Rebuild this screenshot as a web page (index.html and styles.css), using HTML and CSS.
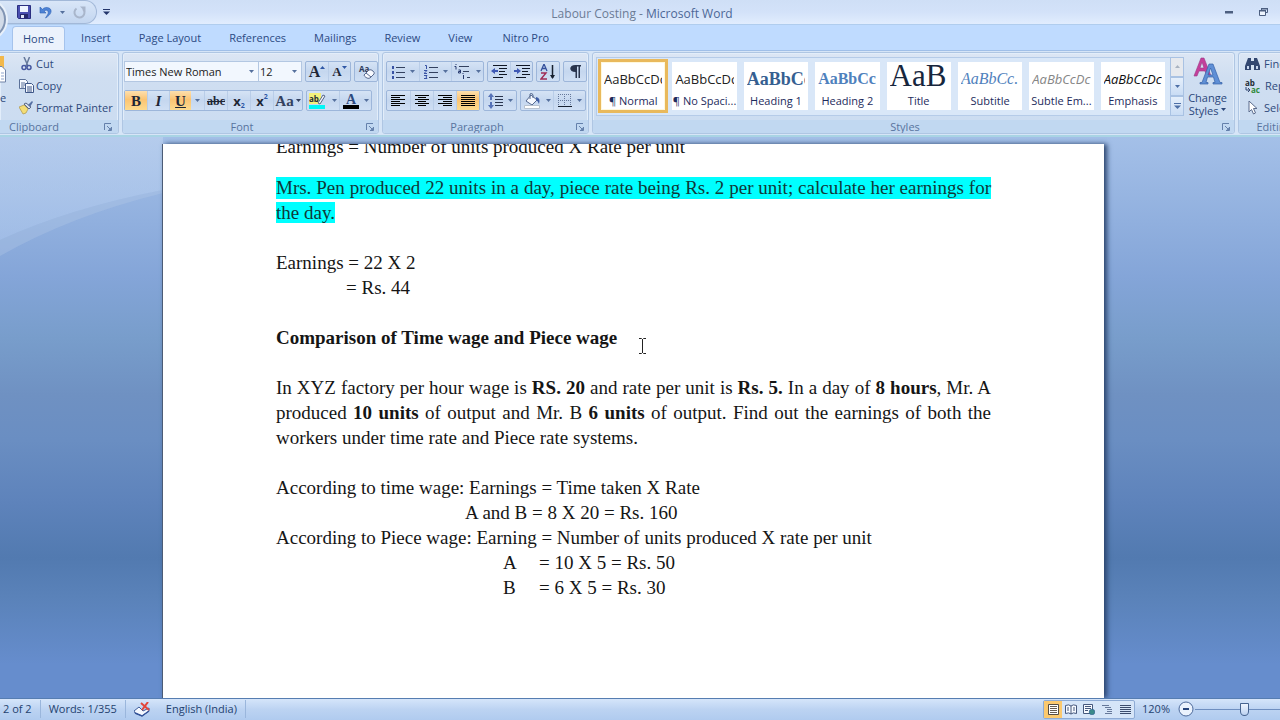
FILE: index.html
```html
<!DOCTYPE html>
<html lang="en">
<head>
<meta charset="utf-8">
<title>Labour Costing - Microsoft Word</title>
<link rel="stylesheet" href="styles.css">
</head>
<body>
<svg class="defs" aria-hidden="true">
  <symbol id="launch" viewBox="0 0 8 8"><path d="M.5 7V.5H7M4 7.5h3.500V4M3 3l4 4" fill="none" stroke="#6480ab"/><path d="M4.500 7h3V4z" fill="#6480ab"/></symbol>
  <symbol id="down" viewBox="0 0 5 3"><path d="M0 0h5L2.500 3z" fill="currentColor"/></symbol>
</svg>
<div class="app">
  <header class="titlebar">
    <div class="orb"></div>
    <div class="quick">
      <button aria-label="Save"><svg width="14" height="14" viewBox="0 0 14 14"><path d="M.5.5h13v13h-12l-1-1z" fill="#4a4fb0" stroke="#2b2f80"/><path d="M3 1h8v6H3z" fill="#eef4ff"/><path d="M3 9h8v4H3z" fill="#26296b"/><path d="M4 10h3v3H4z" fill="#dfe6fa"/></svg></button>
      <button aria-label="Undo"><svg width="13" height="13" viewBox="0 0 13 13"><path d="M1 1v6h6L5 5c3-2 5 0 4 3L6.500 12C12 9 14 4 10 2 7.500.8 5 1.500 3.500 3.300z" fill="#4d83d6" stroke="#2f62b4" stroke-width=".6"/></svg></button>
      <svg class="arrow" width="5" height="3"><use href="#down"/></svg>
      <button aria-label="Repeat"><svg width="13" height="13" viewBox="0 0 13 13"><path d="M3.500 2.500A5 5 0 1 0 10 3" fill="none" stroke="#a9b6cb" stroke-width="2"/><path d="M7 .5h5.500v5.500z" fill="#a9b6cb"/></svg></button>
    </div>
    <button class="customize" aria-label="Customize Quick Access Toolbar"><svg width="7" height="6" viewBox="0 0 7 6"><path d="M0 .5h7" stroke="#23356b"/><path d="M0 2.500h7L3.500 6z" fill="#23356b"/></svg></button>
    <h1 class="title"><span>Labour Costing - </span>Microsoft Word</h1>
    <div class="window-buttons">
      <button aria-label="Minimize"><svg width="8" height="3"><path d="M0 0h8v2.500H0z" fill="#4c5f80"/></svg></button>
      <button aria-label="Restore"><svg width="9" height="8" viewBox="0 0 9 8"><path d="M2.500 2V.5h6v4H7" fill="none" stroke="#4c5f80"/><path d="M.5 2.500h6v5h-6z" fill="#eef5ff" stroke="#4c5f80"/><path d="M2 .8h7M0 2.800h7" stroke="#4c5f80" stroke-width="1.500"/></svg></button>
    </div>
  </header>

  <nav class="tabs">
    <button class="tab active">Home</button><button class="tab">Insert</button><button class="tab">Page Layout</button><button class="tab">References</button><button class="tab">Mailings</button><button class="tab">Review</button><button class="tab">View</button><button class="tab">Nitro Pro</button>
  </nav>

  <section class="ribbon">
    <div class="group clipboard">
      <div class="body">
        <button class="paste"><svg width="6" height="32" viewBox="0 0 6 32"><path d="M0 3h4v14H0z" fill="#f2b84b"/><path d="M-4 13.500h6l3.500 3.500v12H-4z" fill="#fff" stroke="#7083a7"/><path d="M1 20h3M1 23h3M1 26h3" stroke="#8fa5cd"/></svg><span>e</span></button>
        <div class="commands">
          <button><svg width="15" height="14" viewBox="0 0 15 14"><path d="M5 0l4 9M10.500 0L7 9" stroke="#66799c" stroke-width="1.500"/><circle cx="5" cy="10.500" r="2" fill="none" stroke="#4658a0" stroke-width="1.500"/><circle cx="10" cy="10.500" r="2" fill="none" stroke="#4658a0" stroke-width="1.500"/></svg>Cut</button>
          <button><svg width="15" height="14" viewBox="0 0 15 14"><path d="M.5.5h6l2 2v7h-8z" fill="#f5f9ff" stroke="#5b7199"/><path d="M2 4h4M2 6h4M2 8h3" stroke="#5b7199"/><path d="M6.500 4.500h6l2 2v7h-8z" fill="#f5f9ff" stroke="#3e5788"/><path d="M8 8h5M8 10h5M8 12h5" stroke="#3e5788"/></svg>Copy</button>
          <button><svg width="15" height="14" viewBox="0 0 15 14"><path d="M0 6l5-2 4 4-2 4-3 1z" fill="#f4dd74" stroke="#ae9347" stroke-width=".7"/><path d="M5 3l5 5 2-2-5-4z" fill="#d9e0ec" stroke="#5a6784"/><path d="M9 4l4-4 1 1-3 5z" fill="#5670a4"/></svg>Format Painter</button>
        </div>
      </div>
      <div class="label"><span>Clipboard</span><svg width="8" height="8"><use href="#launch"/></svg></div>
    </div>

    <div class="group font">
      <div class="body rows">
        <div class="row">
          <div class="combos">
            <label class="combo family"><select aria-label="Font"><option>Times New Roman</option></select><svg width="5" height="3"><use href="#down"/></svg></label>
            <label class="combo size"><select aria-label="Font size"><option>12</option></select><svg width="5" height="3"><use href="#down"/></svg></label>
          </div>
          <div class="set"><button class="serif grow" aria-label="Grow font">A<svg width="5" height="3" viewBox="0 0 5 3"><path d="M0 3h5L2.500 0z" fill="#2e57a5"/></svg></button><button class="serif shrink" aria-label="Shrink font">A<svg width="5" height="3"><use href="#down"/></svg></button></div>
          <div class="set"><button aria-label="Clear formatting"><svg width="17" height="16" viewBox="0 0 17 16"><text x="1" y="8" class="tiny">Aa</text><path d="M6 11l5-5q2-1 4 1t1 3l-4 4q-2 1-4-.500t-2-2.500z" fill="#f8faff" stroke="#58698d"/><path d="M8 9l5 4" stroke="#58698d"/></svg></button></div>
        </div>
        <div class="row">
          <div class="set">
            <button class="serif on"><b>B</b></button><button class="serif"><i>I</i></button><button class="serif on"><u>U</u></button><button class="drop" aria-label="Underline style"><svg width="5" height="3"><use href="#down"/></svg></button><button class="serif strike"><s>abc</s></button><button class="bold">x<sub>2</sub></button><button class="bold">x<sup>2</sup></button><button class="serif case">Aa<svg width="5" height="3"><use href="#down"/></svg></button>
          </div>
          <div class="set">
            <button class="wide" aria-label="Highlight colour"><svg width="18" height="16" viewBox="0 0 18 16"><rect width="12" height="11" fill="#f3f07b"/><text x="0" y="9" class="tiny dark">ab</text><path d="M9 10l5-8 2 1-5 8z" fill="#eef2fa" stroke="#56668a"/><rect y="12" width="16" height="4" fill="#00f6f6"/></svg><svg width="5" height="3"><use href="#down"/></svg></button><button class="wide" aria-label="Font colour"><svg width="16" height="16" viewBox="0 0 16 16"><text x="3" y="11" class="letter">A</text><rect y="12" width="16" height="4" fill="#000"/></svg><svg width="5" height="3"><use href="#down"/></svg></button>
          </div>
        </div>
      </div>
      <div class="label"><span>Font</span><svg width="8" height="8"><use href="#launch"/></svg></div>
    </div>

    <div class="group paragraph">
      <div class="body rows">
        <div class="row">
          <div class="set">
            <button class="wide" aria-label="Bullets"><svg width="14" height="14" viewBox="0 0 14 14"><path d="M5 2.500h9M5 7.500h9M5 12.500h9" stroke="#33415f"/><path d="M1 1h2v3H1zM1 6h2v3H1zM1 11h2v3H1z" fill="#3953a4"/></svg><svg width="5" height="3"><use href="#down"/></svg></button><button class="wide" aria-label="Numbering"><svg width="14" height="14" viewBox="0 0 14 14"><path d="M5 2.500h9M5 7.500h9M5 12.500h9" stroke="#33415f"/><path d="M1 .5h1.500v3.500M0 5.500h3L0 8.500h3M0 10.500h3l-1 1.500 1 1.500H0" fill="none" stroke="#3953a4"/></svg><svg width="5" height="3"><use href="#down"/></svg></button><button class="wide" aria-label="Multilevel list"><svg width="17" height="15" viewBox="0 0 17 15"><path d="M5 2.500h10M9 7.500h6M13 13.500h3" stroke="#33415f"/><path d="M2 0v1M.5 2.500h1.500v3M4.500 6h2v3h-2V7.500h2M9 9v1M9.500 11v4" fill="none" stroke="#26386d"/></svg><svg width="5" height="3"><use href="#down"/></svg></button>
          </div>
          <div class="set">
            <button aria-label="Decrease indent"><svg width="16" height="13" viewBox="0 0 16 13"><path d="M2 .5h14M8 3.500h8M8 6.500h6M8 9.500h8M2 12.500h10" stroke="#101725"/><path d="M0 6l4-3v2h3v2H4v2z" fill="#3f59b5"/></svg></button><button aria-label="Increase indent"><svg width="16" height="13" viewBox="0 0 16 13"><path d="M2 .5h14M8 3.500h8M8 6.500h6M8 9.500h8M2 12.500h10" stroke="#101725"/><path d="M7 6L3 3v2H0v2h3v2z" fill="#3f59b5"/></svg></button>
          </div>
          <div class="set"><button aria-label="Sort"><svg width="16" height="16" viewBox="0 0 16 16"><path d="M1 7l3-7 3 7M2 4.500h4" fill="none" stroke="#34509c" stroke-width="1.300"/><path d="M1 9h5l-5 6h6" fill="none" stroke="#a02b55" stroke-width="1.400"/><path d="M12.500 1v13" stroke="#17202f" stroke-width="1.500"/><path d="M10 11h5l-2.500 4z" fill="#17202f"/></svg></button></div>
          <div class="set"><button aria-label="Show formatting marks"><svg width="11" height="13" viewBox="0 0 11 13"><path d="M5.500 0H11v1.500h-1V13H8.500V1.500H7V13H5.500V7C-1.500 7-1.500 0 5.500 0z" fill="#29344d"/></svg></button></div>
        </div>
        <div class="row">
          <div class="set align">
            <button aria-label="Align left"><svg width="15" height="12" viewBox="0 0 15 12"><path d="M0 .5h14M0 2.500h9M0 4.500h14M0 6.500h9M0 8.500h14M0 10.500h9" stroke="#000"/></svg></button><button aria-label="Center"><svg width="15" height="12" viewBox="0 0 15 12"><path d="M0 .5h14M3 2.500h8M0 4.500h14M3 6.500h8M0 8.500h14M3 10.500h8" stroke="#000"/></svg></button><button aria-label="Align right"><svg width="15" height="12" viewBox="0 0 15 12"><path d="M0 .5h14M5 2.500h9M0 4.500h14M5 6.500h9M0 8.500h14M5 10.500h9" stroke="#000"/></svg></button><button class="on" aria-label="Justify"><svg width="15" height="12" viewBox="0 0 15 12"><path d="M0 .5h14M0 2.500h14M0 4.500h14M0 6.500h14M0 8.500h14M0 10.500h14" stroke="#000"/></svg></button>
          </div>
          <div class="set"><button class="wide" aria-label="Line spacing"><svg width="15" height="16" viewBox="0 0 15 16"><path d="M7 3.500h8M7 6.500h8M7 9.500h8M7 12.500h8" stroke="#29344d"/><path d="M3 0l3 4H4v3H2V4H0zM3 16l3-4H4V9H2v3H0z" fill="#5672b7"/></svg><svg width="5" height="3"><use href="#down"/></svg></button></div>
          <div class="set">
            <button class="wide" aria-label="Shading"><svg width="17" height="16" viewBox="0 0 17 16"><path d="M7 2l6 5-5 5-6-4z" fill="#f6f9ff" stroke="#55688f"/><path d="M6 6V1q2-2 3 1v3" fill="none" stroke="#55688f"/><path d="M12 4q5 1 3 7-1-3-3-4z" fill="#3d5ca5"/><path d="M.5 12.500h15v3H.5z" fill="#fff" stroke="#b8c2cf"/></svg><svg width="5" height="3"><use href="#down"/></svg></button><button class="wide" aria-label="Borders"><svg width="14" height="14" viewBox="0 0 14 14"><path d="M.5 0v13M6.500 0v13M12.500 0v13M0 .5h13M0 6.500h13" stroke="#66799c" stroke-dasharray="1 1"/><path d="M0 12.500h14" stroke="#17202f"/></svg><svg width="5" height="3"><use href="#down"/></svg></button>
          </div>
        </div>
      </div>
      <div class="label"><span>Paragraph</span><svg width="8" height="8"><use href="#launch"/></svg></div>
    </div>

    <div class="group styles">
      <div class="body">
        <div class="gallery">
          <button class="style selected"><span class="sample">AaBbCcDc</span><span>¶ Normal</span></button>
          <button class="style"><span class="sample">AaBbCcDc</span><span>¶ No Spaci...</span></button>
          <button class="style"><span class="sample h1">AaBbCc</span><span>Heading 1</span></button>
          <button class="style"><span class="sample h2">AaBbCc</span><span>Heading 2</span></button>
          <button class="style"><span class="sample big">AaB</span><span>Title</span></button>
          <button class="style"><span class="sample sub">AaBbCc.</span><span>Subtitle</span></button>
          <button class="style"><span class="sample subtle">AaBbCcDc</span><span>Subtle Em...</span></button>
          <button class="style"><span class="sample emph">AaBbCcDc</span><span>Emphasis</span></button>
        </div>
        <div class="scroll">
          <button aria-label="Previous styles" disabled><svg width="5" height="3" viewBox="0 0 5 3"><path d="M0 3h5L2.500 0z" fill="#a8b2c0"/></svg></button>
          <button aria-label="Next styles"><svg width="5" height="3"><use href="#down"/></svg></button>
          <button aria-label="More styles"><svg width="7" height="6" viewBox="0 0 7 6"><path d="M0 .5h7" stroke="#4d6fa6"/><path d="M0 2.500h7L3.500 6z" fill="#4d6fa6"/></svg></button>
        </div>
        <button class="change"><svg width="30" height="28" viewBox="0 0 30 28"><path d="M1 19L8 1h3l7 18h-4l-2-5H6l-2 5zM7 11h4L9 5z" fill="#c43f9b" stroke="#9b3a86" stroke-width=".6"/><path d="M7 27v-1.500h2L16 7h4l7 18.500h2V27h-9v-1.500h2L20.500 20h-6l-1.500 5.500h2V27zM15 18h5l-2.500-7z" fill="#5f8fd6" stroke="#3762a8" stroke-width=".7"/></svg><span>Change</span><span>Styles <svg width="5" height="3"><use href="#down"/></svg></span></button>
      </div>
      <div class="label"><span>Styles</span><svg width="8" height="8"><use href="#launch"/></svg></div>
    </div>

    <div class="group editing">
      <div class="body">
        <div class="commands">
          <button><svg width="15" height="14" viewBox="0 0 15 14"><path d="M3 1h3v3h3V1h3l3 8v4H9V8H6v5H0V9z" fill="#334770"/><path d="M2 9h2v3H2zM11 9h2v3h-2z" fill="#c8d6ee"/></svg>Find</button>
          <button><svg width="16" height="14" viewBox="0 0 16 14"><text x="0" y="7" class="tiny dark">ab</text><text x="6" y="14" class="tiny green">ac</text><path d="M1 8v3h4M3 9l2 2-2 2" fill="none" stroke="#334770"/></svg>Replace</button>
          <button><svg width="15" height="14" viewBox="0 0 15 14"><path d="M4 0v11l2.500-2.500L8.500 13l2-1-2-4.500H12z" fill="#fff" stroke="#5b6b8c"/></svg>Select</button>
        </div>
      </div>
      <div class="label"><span>Editing</span></div>
    </div>
  </section>

  <main class="workspace">
    <svg class="swoosh" viewBox="0 0 163 119" width="163" height="119"><defs><linearGradient id="g" x2="0" y2="1"><stop offset="0" stop-color="#c0d4f0" stop-opacity=".6"/><stop offset="1" stop-color="#b4cdf0" stop-opacity=".5"/></linearGradient></defs><path d="M0 0h163v53Q70 71 0 103z" fill="url(#g)"/><path d="M0 103Q70 71 163 53v3Q70 79 0 119z" fill="#b8cce9" opacity=".3"/></svg>
    <article class="page">
      <p class="intro">Earnings = Number of units produced X Rate per unit</p>
      <p><mark><span class="full">Mrs. Pen produced 22 units in a day, piece rate being Rs. 2 per unit; calculate her earnings for</span></mark> <mark>the day.</mark></p>
      <div class="para"><p>Earnings = 22 X 2</p><p class="in1">= Rs. 44</p></div>
      <h2>Comparison of Time wage and Piece wage</h2>
      <p class="justify">In XYZ factory per hour wage is <b>RS. 20</b> and rate per unit is <b>Rs. 5.</b> In a day of <b>8 hours</b>, Mr. A produced <b>10 units</b> of output and Mr. B <b>6 units</b> of output. Find out the earnings of both the workers under time rate and Piece rate systems.</p>
      <div class="para">
        <p>According to time wage: Earnings = Time taken X Rate</p>
        <p class="in2">A and B = 8 X 20 = Rs. 160</p>
        <p>According to Piece wage: Earning = Number of units produced X rate per unit</p>
        <p class="in3"><span>A</span>= 10 X 5 = Rs. 50</p>
        <p class="in3"><span>B</span>= 6 X 5 = Rs. 30</p>
      </div>
      <svg class="caret" width="7" height="16" viewBox="0 0 7 16"><path d="M0 .5h2.500l1 1 1-1H7M3.500 1v14M0 15.500h2.500l1-1 1 1H7" fill="none" stroke="#222"/></svg>
    </article>
  </main>

  <footer class="status">
    <span class="cell pages">2 of 2</span><span class="cell words">Words: 1/355</span>
    <button class="cell proof" aria-label="Proofing errors"><svg width="17" height="15" viewBox="0 0 17 15"><path d="M0 9l5-4 4 4 6-3v3l-7 5-7-3z" fill="#f4f8ff" stroke="#3e5c99"/><path d="M1 11l7 3 7-5" fill="none" stroke="#34549a" stroke-width="1.500"/><path d="M7 1l8 7M14 0L8 8" stroke="#e2463b" stroke-width="2"/></svg></button>
    <button class="cell lang">English (India)</button>
    <div class="views">
      <button class="on" aria-label="Print layout"><svg width="11" height="11" viewBox="0 0 11 11"><path d="M.5.5h10v10H.5z" fill="#fff" stroke="#544c44"/><path d="M2 2.500h7M2 4.500h7M2 6.500h7M2 8.500h7" stroke="#665c52"/></svg></button>
      <button aria-label="Full screen reading"><svg width="12" height="11" viewBox="0 0 12 11"><path d="M.5 1.500Q4 0 6 2q2-2 5.500-.500v8Q8 8 6 10 4 8 .5 9.500z" fill="#f7faff" stroke="#46587d"/><path d="M6 2v8M2 4h2M2 6h2M8 4h2M8 6h2" stroke="#46587d"/></svg></button>
      <button aria-label="Web layout"><svg width="12" height="11" viewBox="0 0 12 11"><path d="M.5.5h9v9h-9z" fill="#f7faff" stroke="#46587d"/><path d="M2 2.500h6M2 4.500h6M2 6.500h3" stroke="#46587d"/><circle cx="9" cy="8" r="2.800" fill="#3b8a8a" stroke="#2d5a90" stroke-width=".6"/></svg></button>
      <button aria-label="Outline"><svg width="11" height="11" viewBox="0 0 11 11"><path d="M0 1.500h7M3 3.500h6M5 5.500h5M5 7.500h5M3 9.500h7" stroke="#66789a"/></svg></button>
      <button aria-label="Draft"><svg width="11" height="11" viewBox="0 0 11 11"><path d="M0 1.500h11M0 3.500h11M0 5.500h11M0 7.500h11M0 9.500h11" stroke="#3c4c6d"/></svg></button>
    </div>
    <button class="zoom">120%</button>
    <button class="minus" aria-label="Zoom out"><svg width="16" height="16" viewBox="0 0 16 16"><circle cx="8" cy="8" r="7" fill="#eaf2fd" stroke="#4d6a9b"/><path d="M5 8h6" stroke="#27457c" stroke-width="2"/></svg></button>
    <input class="slider" type="range" min="0" max="100" value="59" aria-label="Zoom">
  </footer>
</div>
</body>
</html>
```
FILE: styles.css
```css
* { box-sizing: border-box; }
body { margin: 0; font: 12px/16px "Open Sans", "Noto Sans", sans-serif; color: #2f4a7c; overflow: hidden; }
button { font: inherit; color: inherit; background: none; border: 0; padding: 0; display: flex; align-items: center; justify-content: center; }
svg { flex: none; }
.defs { display: none; }
.app { height: 100vh; display: flex; flex-direction: column; overflow: hidden; background: #bfdbff; }

.titlebar { flex: none; height: 25px; display: flex; align-items: center; background: linear-gradient(#cfdff6, #d3e2f9 50%, #e1edfe); border-bottom: 1px solid #b0cdee; position: relative; }
.orb { position: absolute; left: -33px; top: 0; width: 39px; height: 39px; border-radius: 50%; border: 2px solid #8094b3; background: #d2dbe8; box-shadow: 0 0 0 2px #e8f0fa; z-index: 2; }
.quick { height: 24px; width: 97px; padding-left: 17px; display: flex; align-items: center; gap: 8px; border: 1px solid #a2b8d8; border-left: 0; border-radius: 0 12px 12px 0; background: linear-gradient(#d9e6f8, #c3d6f0); color: #55709d; }
.customize { width: 18px; }
.title { flex: 1; margin: 0; padding: 4px 56px 0 0; text-align: center; font-size: 12px; font-weight: 400; color: #4c6796; }
.title span { color: #6c7c95; }
.window-buttons { display: flex; align-items: center; gap: 26px; margin-right: 12px; }

.tabs { flex: none; height: 25px; display: flex; align-items: flex-end; padding-left: 12px; color: #2c4a83; }
.tab { height: 24px; padding: 0 14px; font-size: 11px; }
.tab:first-child { padding: 0 10px; margin-right: 2px; }
.tab:last-child { margin-left: 2px; }
.tab.active { background: #ebf2fc; border: 1px solid #a5c3ec; border-bottom: 0; border-radius: 4px 4px 0 0; }

.ribbon { flex: none; height: 87px; display: flex; gap: 3px; padding: 1px 0; border-top: 1px solid #a0bfe8; background: #d6e5f7; border-bottom: 2px solid #a9d4e4; overflow: hidden; font-size: 11px; }
.group { flex: none; display: flex; flex-direction: column; border: 1px solid #afc6e3; border-radius: 3px; background: linear-gradient(#dce6f4, #cfdef1 30%, #cbdcf1); box-shadow: inset 0 0 0 1px #e2edfa; overflow: hidden; }
.body { flex: 1; display: flex; min-height: 0; }
.label { height: 13px; display: flex; align-items: center; justify-content: center; background: #c1d8f1; color: #58749f; padding: 0 4px; }
.label span { flex: 1; text-align: center; padding-right: 9px; }
.clipboard { width: 119px; border-left: 0; border-radius: 0 3px 3px 0; }
.clipboard .label { padding-right: 6px; }
.clipboard .label span { padding-right: 40px; }
.font { width: 257px; }
.paragraph { width: 207px; }
.styles { flex: 1 0 643px; }
.editing { width: 90px; }
.editing .label span { padding-right: 18px; }
.paste { width: 6px; flex-direction: column; justify-content: flex-start; gap: 5px; overflow: hidden; }
.commands { display: flex; flex-direction: column; padding-left: 13px; }
.commands button { height: 22px; gap: 2px; justify-content: flex-start; white-space: nowrap; }
.editing .commands { padding-left: 6px; }
.editing .commands button { gap: 4px; }

.rows { flex-direction: column; gap: 8px; padding: 8px 1px 0; }
.paragraph .rows { padding-left: 3px; }
.row { display: flex; gap: 3px; }
.combos { display: flex; }
.combo { position: relative; display: block; height: 21px; border: 1px solid #b3c7e2; background: #f2f7fe; color: #55709d; }
.combo select { appearance: none; width: 100%; height: 100%; border: 0; padding: 0 1px; background: none; font: inherit; color: #1c1c1c; }
.combo svg { position: absolute; right: 4px; top: 8px; pointer-events: none; }
.family { width: 135px; }
.size { width: 43px; border-left: 0; }
.set { display: flex; height: 21px; border: 1px solid #9db6da; border-radius: 2px; background: linear-gradient(#d5e3f5, #c5d7ef 50%, #cfdff4); color: #55709d; }
.set button { width: 22px; gap: 3px; }
.set button + button { border-left: 1px solid #b9cde8; }
.align button { width: 23px; }
.set .wide { width: 32px; gap: 5px; }
.set .drop { width: 13px; border-left: 0; }
.set .on { background: linear-gradient(#fddfae, #fbc473 45%, #fddb8f); }
.set .serif { font: bold 15px/18px "Liberation Serif", serif; color: #1e2636; gap: 0; }
.set .grow { font-size: 16px; }
.set .shrink { font-size: 13px; }
.grow svg, .shrink svg { align-self: flex-start; margin-top: 4px; color: #2e57a5; }
.set .strike { width: 23px; font-size: 12px; }
.set .bold { font-weight: 700; font-size: 13px; color: #1e2636; gap: 0; width: 23px; }
.set .case { width: 29px; color: #33415f; gap: 2px; }
sub, sup { font-size: 7px; line-height: 8px; color: #2e57a5; }
sub { align-self: flex-end; }
sup { align-self: flex-start; padding-top: 2px; }
.tiny { font: bold 8px "Open Sans", sans-serif; fill: #2b3959; }
.dark { fill: #232b33; }
.green { fill: #2e8a3c; }
.letter { font: bold 14px "Liberation Serif", serif; fill: #2d4a80; }

.styles .body { padding: 4px 3px 0 3px; }
.gallery { flex: 1; min-width: 0; height: 59px; display: flex; gap: 7px; padding: 4px 5px 5px 4px; border: 1px solid #b5cbe8; border-right: 0; background: #d9e7f8; }
.style { flex: 1; min-width: 0; height: 48px; flex-direction: column; justify-content: flex-start; padding: 0 3px; background: #fff; color: #1d2b5c; overflow: hidden; white-space: nowrap; }
.style.selected { outline: 3px solid #e9b95c; box-shadow: 0 0 0 1px #fff8dc inset; }
.sample { width: 100%; height: 31px; line-height: 34px; color: #222; overflow: hidden; text-align: left; font-size: 13px; }
.h1 { font: bold 18px/34px "Liberation Serif", serif; color: #365f91; }
.h2 { font: bold 16px/34px "Liberation Serif", serif; color: #4f81bd; }
.big { font: 31px/28px "Liberation Serif", serif; color: #17263d; }
.sub { font: italic 16px/34px "Liberation Serif", serif; color: #4f81bd; }
.subtle { font-style: italic; color: #868686; }
.emph { font-style: italic; color: #111; }
.scroll { flex: none; width: 14px; height: 59px; display: flex; flex-direction: column; }
.scroll button { flex: 1; border: 1px solid #a9c2e3; background: linear-gradient(#e5effb, #c9dcf4); color: #4d6fa6; }
.scroll button:disabled { background: #e6e9ee; }
.change { flex: none; width: 47px; flex-direction: column; justify-content: flex-start; line-height: 13px; color: #2c477a; }
.change svg:first-child { margin-bottom: 6px; }
.change span svg { vertical-align: middle; }

.workspace { flex: 1; min-height: 0; display: flex; justify-content: center; padding: 7px 14px 0 0; position: relative; overflow: hidden; background: linear-gradient(#a4c0e8, #84a5d8 25%, #789dcb 36%, #6f91c2 46%, #6a8ec2 54%, #5e83bb 65%, #527ab0 75%, #5a82b9 82%, #668dcd 94%); }
.swoosh { position: absolute; left: 0; top: 0; }
.page { position: relative; width: 942px; padding: 0 113px; overflow: hidden; background: #fff; color: #151515; border-left: 1px solid #4c5c76; font: 19px/25px "Liberation Serif", "Times New Roman", serif; box-shadow: 3px 0 5px #2c456d; }
.page p, .page h2 { margin: 0 0 25px; }
.page h2 { font-size: 19px; line-height: 25px; }
.page .intro { margin: -10px 0 16px; }
.para { margin-bottom: 25px; }
.page .para p { margin: 0; }
mark { background: #00ffff; color: #103838; }
.full { display: inline-block; width: 100%; text-align-last: justify; line-height: 22px; background: #00ffff; }
.justify { text-align: justify; }
.page .in1 { padding-left: 70px; }
.page .in2 { padding-left: 189px; }
.page .in3 { padding-left: 227px; }
.in3 span { display: inline-block; width: 36px; }
.caret { position: absolute; left: 476px; top: 194px; }

.status { flex: none; height: 22px; display: flex; align-items: center; padding-bottom: 1px; border-top: 1px solid #567db1; background: linear-gradient(#d5e5fa, #bcd3f2 50%, #b0cbef); color: #24426f; font-size: 11px; overflow: hidden; }
.cell { height: 18px; display: flex; align-items: center; border-right: 1px solid #9ab6dc; padding: 0 8px; white-space: nowrap; }
.pages { padding-left: 3px; }
.lang { padding-left: 15px; }
.proof { border-right: 0; padding-right: 0; }
.views { margin-left: auto; height: 19px; display: flex; border: 1px solid #8eabd5; border-radius: 2px; background: #d6e5f8; }
.views button { width: 18px; }
.views .on { background: #fbc96f; }
.zoom { width: 42px; }
.minus { width: 18px; }
.slider { appearance: none; width: 85px; height: 16px; margin: 0; background: linear-gradient(#6f8fc0, #6f8fc0) center / 100% 1px no-repeat; }
.slider::-webkit-slider-thumb { appearance: none; width: 9px; height: 13px; background: linear-gradient(#eef5ff, #bdd2f0); border: 1px solid #46638f; border-radius: 1px 1px 5px 5px; }
```
